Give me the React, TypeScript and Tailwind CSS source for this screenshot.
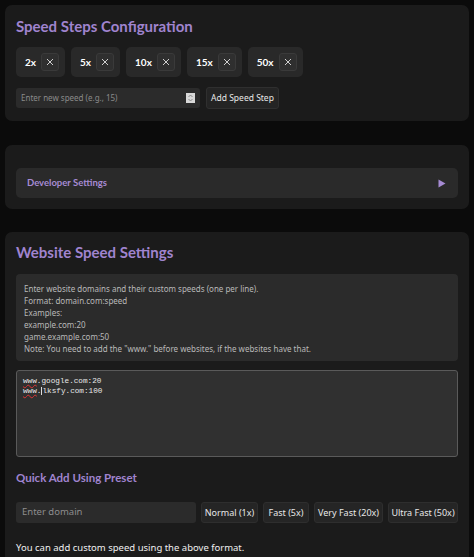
import React from "react";

const font = { fontFamily: '"Noto Sans", "Open Sans", Arial, sans-serif' };
const headFont = { fontFamily: 'Lato, "Noto Sans", Arial, sans-serif' };

function Chip({ label }: { label: string }) {
  return (
    <div className="flex h-[30px] items-center gap-[5px] rounded-[5px] bg-[#292929] pl-[9px] pr-[6px]">
      <span className="text-[10px] font-bold text-white" style={headFont}>{label}</span>
      <span className="flex h-[18px] w-[18px] items-center justify-center rounded-[3px] border border-[#3a3a3a] bg-[#2f2f2f]">
        <svg width="8" height="8" viewBox="0 0 8 8">
          <path d="M1 1L7 7M7 1L1 7" stroke="#cfcfcf" strokeWidth="1" />
        </svg>
      </span>
    </div>
  );
}

function PresetBtn({ label, w }: { label: string; w: string }) {
  return (
    <div className={`flex h-[21px] items-center justify-center rounded-[3px] border border-[#2e2e2e] bg-[#252525] text-[9px] text-[#e8e8e8] ${w}`}>
      {label}
    </div>
  );
}

export default function App() {
  return (
    <div className="min-h-[557px] bg-[#0b0b0b] px-[5px] pt-[5px]" style={font}>
      {/* Card 1 */}
      <div className="rounded-[7px] bg-[#1b1b1b] px-[11px] pb-[12px] pt-[11px]">
        <h1 className="text-[15px] font-bold leading-[20px] text-[#a084cf]" style={headFont}>Speed Steps Configuration</h1>
        <div className="mt-[11px] flex gap-[6px]">
          <Chip label="2x" />
          <Chip label="5x" />
          <Chip label="10x" />
          <Chip label="15x" />
          <Chip label="50x" />
        </div>
        <div className="mt-[10px] flex items-center gap-[6px]">
          <div className="flex h-[20px] w-[184px] items-center justify-between rounded-[3px] bg-[#2b2b2b] pl-[5px] pr-[5px]">
            <span className="text-[8px] text-[#8a8a8a]">Enter new speed (e.g., 15)</span>
            <span className="flex h-[10px] w-[9px] flex-col items-center justify-center bg-[#d8d8d8]">
              <svg width="5" height="8" viewBox="0 0 5 8">
                <path d="M0.5 3L2.5 1L4.5 3M0.5 5L2.5 7L4.5 5" stroke="#777" strokeWidth="0.8" fill="none" />
              </svg>
            </span>
          </div>
          <div className="flex h-[22px] w-[73px] items-center justify-center rounded-[3px] border border-[#2f2f2f] bg-[#242424] text-[8.5px] text-[#e8e8e8]">
            Add Speed Step
          </div>
        </div>
      </div>

      {/* Card 2 */}
      <div className="mt-[24px] rounded-[7px] bg-[#1b1b1b] px-[11px] pb-[11px] pt-[23px]">
        <div className="flex h-[30px] items-center justify-between rounded-[5px] bg-[#2a2a2a] pl-[11px] pr-[12px]">
          <span className="text-[9.5px] font-bold text-[#a68bd3]" style={headFont}>Developer Settings</span>
          <svg width="8" height="9" viewBox="0 0 8 9">
            <path d="M0.5 0.5L7.5 4.5L0.5 8.5Z" fill="#a68bd3" />
          </svg>
        </div>
      </div>

      {/* Card 3 */}
      <div className="mt-[23px] rounded-t-[7px] bg-[#1b1b1b] px-[11px] pb-[4px] pt-[10px]">
        <h2 className="text-[15px] font-bold leading-[20px] text-[#a084cf]" style={headFont}>Website Speed Settings</h2>
        <div className="mt-[12px] rounded-[4px] bg-[#2b2b2b] px-[8px] pb-[6px] pt-[9px] text-[8px] leading-[12px] text-[#b9b9b9]">
          <div>Enter website domains and their custom speeds (one per line).</div>
          <div>Format: domain.com:speed</div>
          <div>Examples:</div>
          <div>example.com:20</div>
          <div>game.example.com:50</div>
          <div>Note: You need to add the "www." before websites, if the websites have that.</div>
        </div>
        <div
          className="mt-[9px] h-[87px] rounded-[3px] border border-[#5a5a5a] bg-[#303030] px-[6px] pt-[5px] text-[7.7px] leading-[10px] text-[#e8e8e8]"
          style={{ fontFamily: '"Liberation Mono", "DejaVu Sans Mono", monospace' }}
        >
          <div>
            <span className="underline decoration-[#d33] decoration-wavy decoration-[1px]">www</span>.google.com:20
          </div>
          <div>
            <span className="underline decoration-[#d33] decoration-wavy decoration-[1px]">www</span>.
            <span className="border-l border-[#ddd]">lksfy.com:100</span>
          </div>
        </div>
        <h3 className="mt-[13px] text-[11.5px] font-bold leading-[16px] text-[#a084cf]" style={headFont}>Quick Add Using Preset</h3>
        <div className="mt-[16px] flex items-center gap-[5px]">
          <div className="flex h-[21px] w-[180px] items-center rounded-[3px] bg-[#2b2b2b] pl-[6px] text-[9.5px] text-[#8e8e8e]">
            Enter domain
          </div>
          <PresetBtn label="Normal (1x)" w="w-[57px]" />
          <PresetBtn label="Fast (5x)" w="w-[46px]" />
          <PresetBtn label="Very Fast (20x)" w="w-[69px]" />
          <PresetBtn label="Ultra Fast (50x)" w="w-[70px]" />
        </div>
        <p className="mt-[18px] text-[9.5px] leading-[14px] text-[#f0f0f0]">You can add custom speed using the above format.</p>
      </div>
    </div>
  );
}
